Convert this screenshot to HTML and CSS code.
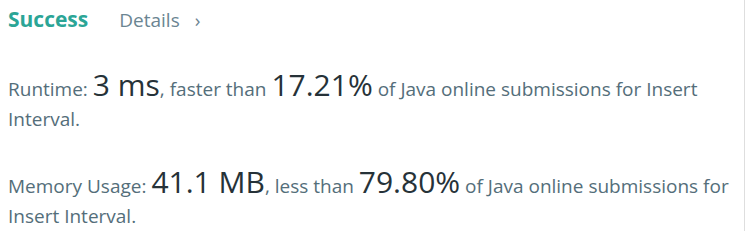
FILE: index.html
```html
<!DOCTYPE html>
<html lang="en">
<head>
    <meta charset="UTF-8">
    <title>Submission Detail</title>
    <link rel="stylesheet" href="styles.css">
</head>
<body>
    <div class="result">
        <div class="result-header">
            <span class="status">Success</span>
            <a class="details" href="#">Details <span class="chevron">&rsaquo;</span></a>
        </div>

        <p class="stat">Runtime: <span class="big">3 ms</span>, faster than <span class="big">17.21%</span> of Java online submissions for Insert Interval.</p>
        <p class="stat">Memory Usage: <span class="big">41.1 MB</span>, less than <span class="big">79.80%</span> of Java online submissions for Insert Interval.</p>
    </div>
</body>
</html>
```

FILE: styles.css
```css
body {
    margin: 0;
    font-family: "Open Sans", sans-serif;
    background: #fff;
}
.result {
    padding: 0 0 0 8px;
    border-right: 1px solid #dedede;
    height: 231px;
    box-sizing: border-box;
    color: #546e7a;
}
.result-header {
    display: flex;
    align-items: baseline;
    gap: 31px;
    padding-top: 5px;
    height: 31px;
}
.status {
    font-size: 21px;
    font-weight: 700;
    color: #2ba596;
}
.details {
    font-size: 19px;
    color: #6b8592;
    text-decoration: none;
}
.chevron {
    margin-left: 10px;
}
.stat {
    font-size: 19px;
    line-height: 30px;
    margin: 34px 0 0;
    padding-right: 4px;
}
.stat + .stat {
    margin-top: 33px;
}
.big {
    font-size: 30px;
    line-height: 30px;
    color: #263238;
}
```
